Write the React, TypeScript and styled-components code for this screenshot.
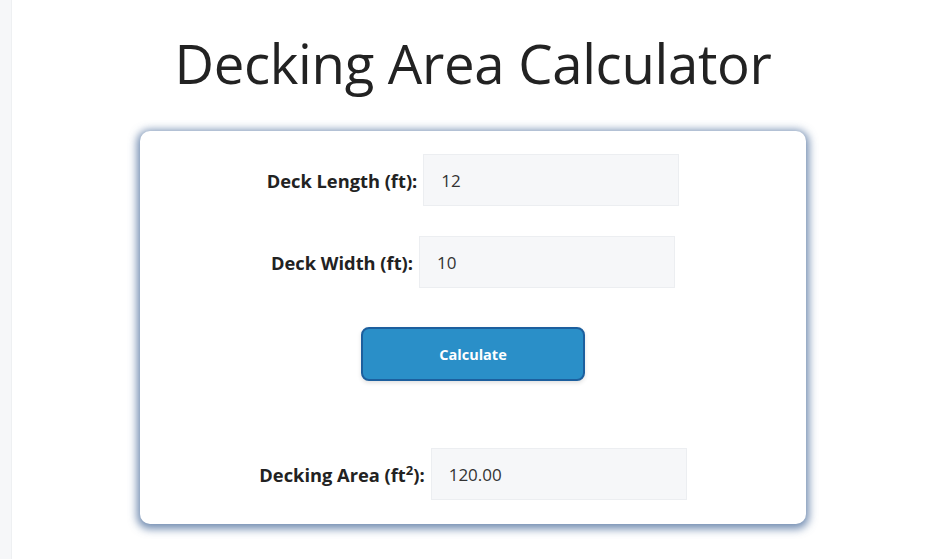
import React, { FunctionComponent } from 'react'
import styled, { createGlobalStyle } from 'styled-components'

const GlobalStyle = createGlobalStyle`
    html, body {
        margin: 0;
        padding: 0;
        background: #ffffff;
        font-family: "Open Sans", "Noto Sans", Arial, sans-serif;
        color: #212529;
    }
`

const Page = styled.div`
    display: flex;
    min-height: 559px;
`

const SideStrip = styled.div`
    width: 11px;
    flex-shrink: 0;
    background: #f6f7f9;
    border-right: 1px solid #eef0f2;
`

const Main = styled.main`
    flex: 1;
    display: flex;
    flex-direction: column;
    align-items: center;
    padding-left: 8px;
`

const Title = styled.h1`
    margin: 23px 0 28px;
    font-size: 54.5px;
    font-weight: 400;
    line-height: 80px;
    color: #222;
    letter-spacing: -0.3px;
`

const Card = styled.div`
    width: 666px;
    box-sizing: border-box;
    background: #fff;
    border-radius: 10px;
    padding: 23px 0 24px;
    box-shadow: 0 2px 9px 3px rgba(62, 98, 148, 0.72);
    display: flex;
    flex-direction: column;
    align-items: center;
`

const Field = styled.div<{ $gap: number }>`
    display: flex;
    align-items: center;
    gap: 6px;
    margin-bottom: ${p => p.$gap}px;
`

const Label = styled.label`
    font-weight: 700;
    font-size: 18.3px;
    color: #222;

    sup {
        font-size: 13px;
        line-height: 0;
    }
`

const ValueBox = styled.input`
    width: 256px;
    height: 52px;
    box-sizing: border-box;
    background: #f6f7f9;
    border: 1px solid #eceef1;
    padding: 0 17px;
    font-family: "Open Sans", "Noto Sans", Arial, sans-serif;
    font-size: 17px;
    color: #333;
    outline: none;
`

const CalcButton = styled.button`
    width: 224px;
    height: 54px;
    background: #2a8fc8;
    border: 2px solid #1c5f9e;
    border-radius: 8px;
    color: #fff;
    font-family: "Open Sans", "Noto Sans", Arial, sans-serif;
    font-weight: 700;
    font-size: 14.5px;
    box-shadow: 0 2px 4px rgba(0, 0, 0, 0.12);
    margin-bottom: 67px;
    cursor: pointer;
`

const App: FunctionComponent = () => {
    return (
        <>
            <GlobalStyle />
            <Page>
                <SideStrip />
                <Main>
                    <Title>Decking Area Calculator</Title>
                    <Card>
                        <Field $gap={30}>
                            <Label>Deck Length (ft):</Label>
                            <ValueBox defaultValue="12" />
                        </Field>
                        <Field $gap={39}>
                            <Label>Deck Width (ft):</Label>
                            <ValueBox defaultValue="10" />
                        </Field>
                        <CalcButton>Calculate</CalcButton>
                        <Field $gap={0}>
                            <Label>Decking Area (ft<sup>2</sup>):</Label>
                            <ValueBox defaultValue="120.00" readOnly />
                        </Field>
                    </Card>
                </Main>
            </Page>
        </>
    )
}

export default App
